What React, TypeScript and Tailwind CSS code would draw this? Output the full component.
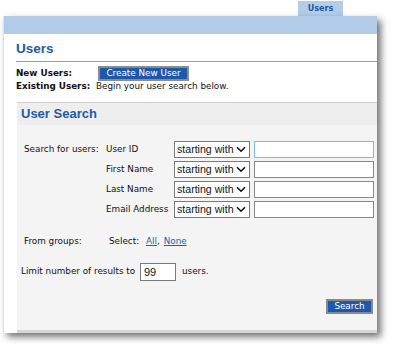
import React from "react";

const Chevron = () => (
  <svg width="10" height="7" viewBox="0 0 10 7" className="ml-auto mr-[3px]">
    <polyline points="1,1.2 5,5.2 9,1.2" fill="none" stroke="#111" strokeWidth="1.6" />
  </svg>
);

const Sel = () => (
  <div className="flex h-[17px] w-[76px] items-center border border-[#7a7a7a] bg-white pl-[2px] font-['Liberation_Sans',Arial,sans-serif] text-[10.6px] leading-none text-[#111]">
    <span>starting with</span>
    <Chevron />
  </div>
);

const Inp = ({ focus }: { focus?: boolean }) => (
  <div
    className={
      focus
        ? "h-[17px] w-[120px] border border-[#7cb9e6] bg-white"
        : "h-[17px] w-[120px] border border-[#8a8a8a] bg-white"
    }
  />
);

export default function App() {
  const rows = [
    ["Search for users:", "User ID", true],
    ["", "First Name", false],
    ["", "Last Name", false],
    ["", "Email Address", false],
  ] as const;
  return (
    <div className="relative h-[349px] w-[393px] overflow-hidden bg-white font-['DejaVu_Sans',Verdana,sans-serif] text-[8.8px] text-[#111]">
      <div className="h-[16px] pt-[1px]">
        <div className="ml-[298px] flex h-[15px] w-[45px] items-center justify-center bg-[#b3cde9] text-[8px] font-bold text-[#1f57a0]">
          Users
        </div>
      </div>
      <div className="ml-[3px] flex h-[317px] w-[374px] flex-col border-l border-[#e4e4e4] bg-white shadow-[4px_4px_7px_rgba(0,0,0,0.55)]">
        <div className="h-[18px] shrink-0 bg-[#b1cbe9]" />
        <div className="ml-[12px] h-[28px] shrink-0 border-b border-[#9c9c9c] pt-[8px] font-['Liberation_Sans',Arial,sans-serif] text-[13.5px] font-bold leading-[14px] text-[#1d5aa6]">
          Users
        </div>
        <div className="ml-[12px] mt-[4px] flex h-[15px] shrink-0 items-center">
          <span className="w-[82px] font-bold">New Users:</span>
          <div className="flex h-[15px] w-[91px] items-center justify-center border-2 border-[#8c8c8c] bg-[#1c59ab] text-white">
            Create New User
          </div>
        </div>
        <div className="ml-[12px] flex h-[12px] shrink-0 items-center">
          <span className="w-[80px] font-bold">Existing Users:</span>
          <span>Begin your user search below.</span>
        </div>
        <div className="ml-[13px] mt-[9px] flex flex-1 flex-col border-t border-[#cfcfcf] bg-[#f4f4f4]">
          <div className="flex h-[22px] shrink-0 items-center bg-[#eeeeee] pl-[4px] font-['Liberation_Sans',Arial,sans-serif] text-[13px] font-bold text-[#1d5aa6]">
            User Search
          </div>
          <div className="flex flex-1 flex-col border-b-[3px] border-[#d6d6d6] pl-[7px] pt-[16px]">
            <div className="flex flex-col gap-[3px]">
              {rows.map(([a, b, f], i) => (
                <div key={i} className="flex h-[17px] items-center">
                  <span className="w-[82px]">{a}</span>
                  <span className="w-[68px]">{b}</span>
                  <Sel />
                  <div className="w-[4px]" />
                  <Inp focus={f} />
                </div>
              ))}
            </div>
            <div className="mt-[18px] flex h-[12px] items-center">
              <span className="w-[85px]">From groups:</span>
              <span className="w-[37px]">Select:</span>
              <a className="text-[#1c5fb0] underline">All</a>
              <span className="mr-[4px]">,</span>
              <a className="text-[#1c5fb0] underline">None</a>
            </div>
            <div className="-ml-[3px] mt-[15px] flex h-[18px] items-center">
              <span className="w-[119px]">Limit number of results to</span>
              <div className="flex h-[18px] w-[36px] items-center border border-[#7a7a7a] bg-white pl-[3px] font-['Liberation_Sans',Arial,sans-serif] text-[11px]">
                99
              </div>
              <span className="ml-[6px]">users.</span>
            </div>
            <div className="mt-[18px] flex justify-end pr-[4px]">
              <div className="flex h-[15px] w-[47px] items-center justify-center border-2 border-[#8a8a8a] bg-[#1c59ab] text-white">
                Search
              </div>
            </div>
          </div>
        </div>
      </div>
    </div>
  );
}
